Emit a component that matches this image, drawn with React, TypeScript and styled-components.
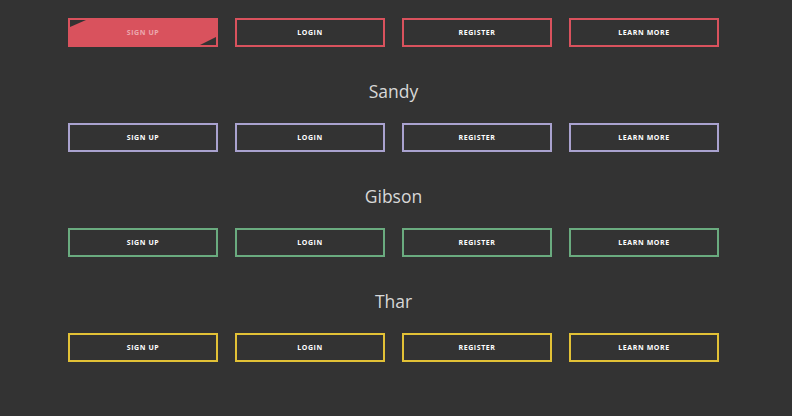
import styled, { createGlobalStyle } from 'styled-components';

const GlobalStyle = createGlobalStyle`
    html, body {
        margin: 0;
        padding: 0;
        background: #333333;
        font-family: "Open Sans", "Liberation Sans", sans-serif;
    }
`

const Page = styled.div`
    width: 792px;
    height: 416px;
    overflow: hidden;
    background: #333333;
    padding: 18px 0 0 68px;
    box-sizing: border-box;
`

const Section = styled.section`
    width: 651px;
`

const Title = styled.h2`
    margin: 32px 0 20px;
    height: 24px;
    line-height: 24px;
    text-align: center;
    font-family: "Open Sans", "Noto Sans", sans-serif;
    font-weight: 400;
    font-size: 17.5px;
    color: #d8d8d8;
`

const Row = styled.div`
    display: grid;
    grid-template-columns: repeat(4, 150px);
    gap: 17px;
`

const Button = styled.button<{ $color: string; $active?: boolean }>`
    position: relative;
    height: 29px;
    padding: 0;
    border: 2px solid ${p => p.$color};
    background: ${p => (p.$active ? p.$color : 'transparent')};
    color: ${p => (p.$active ? 'rgba(255, 255, 255, 0.5)' : '#ffffff')};
    font-family: "Open Sans", "Liberation Sans", sans-serif;
    font-weight: 700;
    font-size: 7px;
    letter-spacing: 0.6px;
    text-transform: uppercase;
    cursor: pointer;
    overflow: hidden;

    ${p => p.$active && `
        &::before, &::after {
            content: '';
            position: absolute;
            width: 0;
            height: 0;
            border-style: solid;
        }
        &::before {
            top: 0;
            left: 0;
            border-width: 7px 16px 0 0;
            border-color: #333333 transparent transparent transparent;
        }
        &::after {
            bottom: 0;
            right: 0;
            border-width: 0 0 8px 16px;
            border-color: transparent transparent #333333 transparent;
        }
    `}
`

const themes = [
    { name: '', color: '#d9525d' },
    { name: 'Sandy', color: '#a9a2cf' },
    { name: 'Gibson', color: '#6aab7f' },
    { name: 'Thar', color: '#e2c136' },
]

const labels = ['Sign up', 'Login', 'Register', 'Learn more']

export default function App() {
    return (
        <>
            <GlobalStyle />
            <Page>
                {themes.map((t, i) => (
                    <Section key={t.color}>
                        {t.name && <Title>{t.name}</Title>}
                        <Row>
                            {labels.map((label, j) => (
                                <Button key={label} $color={t.color} $active={i === 0 && j === 0}>
                                    {label}
                                </Button>
                            ))}
                        </Row>
                    </Section>
                ))}
            </Page>
        </>
    )
}
